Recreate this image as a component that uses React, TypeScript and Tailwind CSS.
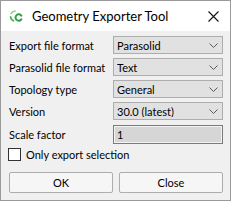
import React from "react";

const font = { fontFamily: 'Lato, "Noto Sans", sans-serif' };

function Chevron() {
  return (
    <svg width="9" height="5" viewBox="0 0 9 5" className="shrink-0">
      <path d="M0.5 0.5 L4.5 4.5 L8.5 0.5" fill="none" stroke="#5a5a5a" strokeWidth="1" />
    </svg>
  );
}

function Combo({ value }: { value: string }) {
  return (
    <div className="h-[18px] bg-[#e1e1e1] border border-[#adadad] flex items-center pl-[3px] pr-[4px] text-[11px] leading-none text-black">
      <span className="flex-1 truncate">{value}</span>
      <Chevron />
    </div>
  );
}

function Logo() {
  return (
    <svg width="15" height="14" viewBox="0 0 15 14">
      <path d="M6 2.2 A5 5 0 0 0 2.2 4.5" fill="none" stroke="#9dd49b" strokeWidth="1.8" strokeLinecap="round" />
      <path d="M1.6 7.8 A5 5 0 0 0 4.5 11.8" fill="none" stroke="#4cb35a" strokeWidth="1.8" strokeLinecap="round" />
      <path d="M12.3 6.6 A3.2 3.2 0 1 0 12.3 10.4" fill="none" stroke="#2f9e45" strokeWidth="2" strokeLinecap="round" />
    </svg>
  );
}

export default function App() {
  const rows = [
    ["Export file format", "Parasolid"],
    ["Parasolid file format", "Text"],
    ["Topology type", "General"],
    ["Version", "30.0 (latest)"],
  ];
  return (
    <div className="w-[231px] h-[201px] border border-[#9a9a9a] bg-[#f0f0f0] flex flex-col text-black" style={font}>
      <div className="h-[30px] bg-white flex items-center shrink-0">
        <div className="pl-[8px] pr-[8px] flex items-center">
          <Logo />
        </div>
        <span className="text-[13px] leading-none flex-1 pt-[1px]">Geometry Exporter Tool</span>
        <div className="w-[30px] flex items-center justify-center pr-[4px]">
          <svg width="11" height="11" viewBox="0 0 11 11">
            <path d="M0.5 0.5 L10.5 10.5 M10.5 0.5 L0.5 10.5" stroke="#111" strokeWidth="1.1" />
          </svg>
        </div>
      </div>
      <div className="flex flex-col px-[7px] pt-[5px]">
        <div className="grid grid-cols-[105px_110px] gap-y-[4px]">
          {rows.map(([l, v]) => (
            <React.Fragment key={l}>
              <div className="h-[18px] flex items-center text-[11px] leading-none pl-[1px] whitespace-nowrap">{l}</div>
              <Combo value={v} />
            </React.Fragment>
          ))}
          <div className="h-[19px] mt-[1px] flex items-center text-[11px] leading-none pl-[1px] whitespace-nowrap">Scale factor</div>
          <div className="h-[19px] mt-[1px] border border-[#7a7a7a] p-[1px] bg-[#f4f4f4]">
            <div className="h-full bg-[#d6d6d6] flex items-center pl-[2px] text-[11px] leading-none">1</div>
          </div>
        </div>
        <div className="flex items-center mt-[4px] h-[13px]">
          <div className="w-[13px] h-[13px] border border-[#333333] bg-white shrink-0" />
          <span className="ml-[5px] text-[11px] leading-none whitespace-nowrap">Only export selection</span>
        </div>
        <div className="grid grid-cols-2 gap-[6px] mt-[11px] pl-[1px]">
          <button className="h-[21px] bg-[#f6f6f6] border border-[#adadad] rounded-[2px] text-[11px] leading-none text-black">OK</button>
          <button className="h-[21px] bg-[#f6f6f6] border border-[#adadad] rounded-[2px] text-[11px] leading-none text-black">Close</button>
        </div>
      </div>
    </div>
  );
}
